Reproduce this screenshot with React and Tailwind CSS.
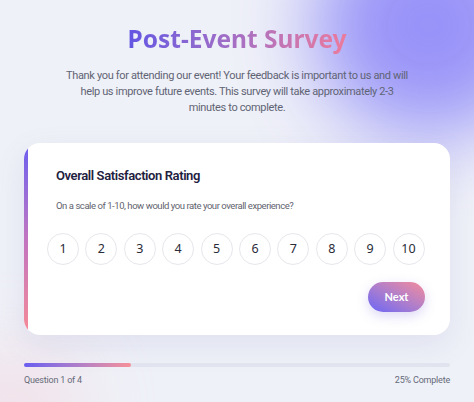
export default function App() {
  const ratings = [1, 2, 3, 4, 5, 6, 7, 8, 9, 10];

  return (
    <div
      className="relative min-h-[402px] w-full overflow-hidden bg-[#eff1f8] px-6 pt-[21px]"
      style={{ fontFamily: 'Roboto, "Noto Sans", sans-serif' }}
    >
      {/* background glows */}
      <div className="pointer-events-none absolute -right-[70px] -top-[85px] h-[220px] w-[230px] rounded-full bg-[#8f89f8] opacity-90 blur-[40px]" />
      <div className="pointer-events-none absolute -bottom-[70px] -left-[60px] h-[120px] w-[140px] rounded-full bg-[#f7c6cf] opacity-40 blur-[40px]" />

      <div className="relative">
        <div className="text-center">
          <h1
            className="inline-block bg-linear-to-r from-[#6355e3] to-[#ec7a9c] bg-clip-text text-[24.5px] font-bold leading-[36px] text-transparent"
            style={{ fontFamily: '"Noto Sans", sans-serif' }}
          >
            Post-Event Survey
          </h1>
        </div>
        <p className="mx-auto mt-[11px] max-w-[350px] text-center text-[11px] leading-[16px] tracking-[-0.35px] text-[#5f6474]">
          Thank you for attending our event! Your feedback is important to us and will help us improve future events. This survey will take approximately 2-3 minutes to complete.
        </p>

        <div className="mt-[27px] flex overflow-hidden rounded-2xl bg-white shadow-[0_10px_30px_rgba(110,110,170,0.12)]">
          <div className="w-1 shrink-0 bg-linear-to-b from-[#6a5cf0] via-[#c274c0] to-[#f78a95]" />
          <div className="flex-1 pb-[23px] pl-[28px] pr-[25px] pt-[23px]">
            <h2 className="text-[13px] font-semibold leading-[20px] tracking-[-0.4px] text-[#1e2140]">
              Overall Satisfaction Rating
            </h2>
            <p className="mt-[13px] text-[9.5px] leading-[14px] tracking-[-0.45px] text-[#5f636e]">
              On a scale of 1-10, how would you rate your overall experience?
            </p>
            <div className="-ml-[9px] mt-[20px] flex gap-[6.4px]">
              {ratings.map((n) => (
                <button
                  key={n}
                  className="flex h-8 w-8 shrink-0 items-center justify-center rounded-full border-[1.5px] border-[#e6e7ec] bg-white text-[12.5px] text-[#2a2c38]"
                  style={{ fontFamily: '"Noto Sans", sans-serif' }}
                >
                  {n}
                </button>
              ))}
            </div>
            <div className="mt-[17px] flex justify-end">
              <button
                className="h-[30px] w-[57px] rounded-full bg-linear-to-tr from-[#6b62f5] to-[#f58a98] text-[11px] font-bold text-white shadow-[0_4px_12px_rgba(120,100,220,0.25)]"
                style={{ fontFamily: 'Lato, "Noto Sans", sans-serif' }}
              >
                Next
              </button>
            </div>
          </div>
        </div>

        <div className="mt-[28px] h-1 w-full rounded-full bg-[#e1e3ee]">
          <div className="h-1 w-1/4 rounded-full bg-linear-to-r from-[#6a5cf0] to-[#f78f98]" />
        </div>
        <div className="mt-[6px] flex justify-between text-[9px] leading-[14px] tracking-[-0.2px] text-[#656a78]">
          <span>Question 1 of 4</span>
          <span>25% Complete</span>
        </div>
      </div>
    </div>
  );
}
